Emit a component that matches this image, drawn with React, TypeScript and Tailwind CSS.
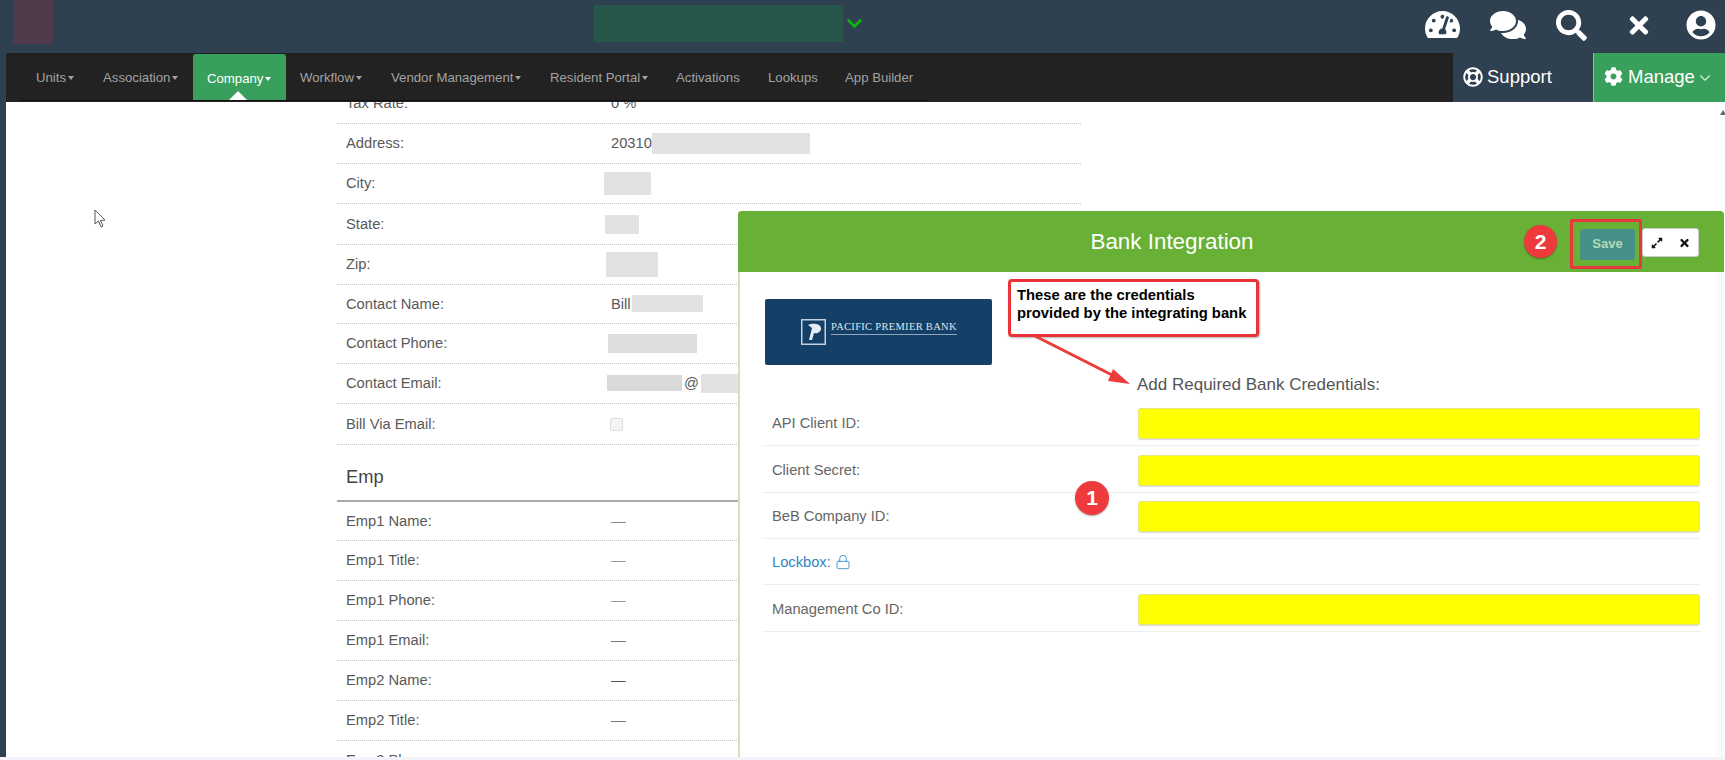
import { FaTachometerAlt, FaComments, FaSearch, FaTimes, FaUserCircle, FaChevronDown, FaRegLifeRing, FaCog, FaExpandAlt } from "react-icons/fa"
import { ChevronDown, Lock } from "lucide-react"

const navItems = [
  { label: "Units", width: "w-[67px]", caret: true },
  { label: "Association", width: "w-[104px]", caret: true },
  { label: "Company", width: "w-[93px]", caret: true, active: true },
  { label: "Workflow", width: "w-[91px]", caret: true },
  { label: "Vendor Management", width: "w-[159px]", caret: true },
  { label: "Resident Portal", width: "w-[126px]", caret: true },
  { label: "Activations", width: "w-[92px]" },
  { label: "Lookups", width: "w-[77px]" },
  { label: "App Builder", width: "w-[96px]" },
]

function Blob({ className }: { className: string }) {
  return <span className={`block bg-[#e2e2e2] ${className}`} />
}

function InfoRow({ label, height, children }: { label: string; height: string; children?: React.ReactNode }) {
  return (
    <div className={`flex items-center border-b border-dotted border-[#c8c8c8] pl-[9px] text-[14.7px] text-[#595959] ${height}`}>
      <span className="w-[265px] shrink-0">{label}</span>
      <div className="flex items-center">{children}</div>
    </div>
  )
}

function CredentialRow({ label, height, filled = true, children }: { label?: string; height: string; filled?: boolean; children?: React.ReactNode }) {
  return (
    <div className={`flex items-center border-b border-[#eeeeee] pt-[2px] text-[14.7px] text-[#666666] ${height}`}>
      <div className="w-[376px] shrink-0 pl-[10px]">{children ?? label}</div>
      {filled && <div className="h-[31px] flex-1 rounded-[3px] border border-[#e6e67a] bg-[#ffff00] shadow-[0_1px_1px_rgba(0,0,0,0.15)]" />}
    </div>
  )
}

function NumberBadge({ value, className }: { value: string; className?: string }) {
  return (
    <div className={`flex h-[33px] w-[33px] items-center justify-center rounded-full bg-[#ee3a3c] text-[21px] font-bold text-white shadow-[0_1px_2px_rgba(0,0,0,0.35)] ${className ?? ""}`}>
      {value}
    </div>
  )
}

export default function App() {
  return (
    <div className="flex h-[760px] w-[1725px] flex-col overflow-hidden bg-[#2f4050] font-['Liberation_Sans',Arial,sans-serif]">
      {/* Top bar */}
      <header className="flex h-[53px] shrink-0 items-start">
        <div className="ml-[13px] h-[44px] w-[40px] bg-[#4f3a4b]" />
        <div className="ml-[541px] mt-[5px] h-[37px] w-[249px] bg-[#27574a]" />
        <FaChevronDown className="ml-[3px] mt-[15px] h-[17px] w-[17px] text-[#0cb40c]" />
        <div className="ml-auto flex items-center text-white">
          <FaTachometerAlt className="mt-[7px] h-[35px] w-[35px]" />
          <FaComments className="ml-[30px] mt-[7px] h-[34px] w-[36px]" />
          <FaSearch className="ml-[30px] mt-[8px] h-[31px] w-[31px]" />
          <FaTimes className="ml-[41px] mt-[8px] h-[27px] w-[22px]" />
          <FaUserCircle className="ml-[36px] mr-[9px] mt-[8px] h-[30px] w-[30px]" />
        </div>
      </header>

      {/* Main nav */}
      <nav className="ml-[6px] flex h-[49px] shrink-0 bg-[#222222]">
        <div className="ml-[16px] flex h-[48px] border-b border-[#111111]">
          {navItems.map((item) => (
            <a
              key={item.label}
              className={`relative flex items-center pl-[14px] pt-[3px] text-[13.2px] ${item.width} ${item.active ? "mt-[1px] rounded-t-[3px] bg-[#38a05c] text-white" : "text-[#a3a3a3]"}`}
            >
              {item.label}
              {item.caret && <span className="ml-[2px] h-0 w-0 border-x-[3.5px] border-t-[4px] border-x-transparent border-t-current" />}
              {item.active && <span className="absolute bottom-0 left-[36px] h-0 w-0 border-x-[9px] border-b-[9px] border-x-transparent border-b-white" />}
            </a>
          ))}
        </div>
        <div className="ml-auto flex h-[49px] w-[140px] items-center border-b border-[#3d3d5c] bg-[#2f4050] pl-[10px] text-[18.5px] text-white">
          <FaRegLifeRing className="h-[20px] w-[20px]" />
          <span className="ml-[4px]">Support</span>
        </div>
        <div className="flex h-[49px] w-[132px] items-center border-l border-[#9fb5a8] bg-[#38a05c] pb-[2px] pl-[10px] text-[18.5px] text-white">
          <FaCog className="h-[19px] w-[19px]" />
          <span className="ml-[5px]">Manage</span>
          <ChevronDown className="ml-[1px] mt-[3px] h-[18px] w-[18px] text-[#d5ecdd]" strokeWidth={1.5} />
        </div>
      </nav>

      {/* Page */}
      <main className="relative ml-[6px] min-h-0 flex-1 overflow-hidden bg-white">
        <div className="ml-[331px] w-[744px] -mt-[18px]">
          <InfoRow label="Tax Rate:" height="h-[40px]">0 %</InfoRow>
          <InfoRow label="Address:" height="h-[40px]">
            20310<Blob className="h-[21px] w-[158px]" />
          </InfoRow>
          <InfoRow label="City:" height="h-[40px]">
            <Blob className="-ml-[7px] h-[23px] w-[47px]" />
          </InfoRow>
          <InfoRow label="State:" height="h-[41px]">
            <Blob className="-ml-[6px] h-[19px] w-[34px]" />
          </InfoRow>
          <InfoRow label="Zip:" height="h-[40px]">
            <Blob className="-ml-[5px] h-[25px] w-[52px]" />
          </InfoRow>
          <InfoRow label="Contact Name:" height="h-[39px]">
            Bill<Blob className="ml-[1px] h-[17px] w-[71px]" />
          </InfoRow>
          <InfoRow label="Contact Phone:" height="h-[40px]">
            <Blob className="-ml-[3px] h-[19px] w-[89px] !bg-[#dddddd]" />
          </InfoRow>
          <InfoRow label="Contact Email:" height="h-[40px]">
            <Blob className="-ml-[4px] h-[16px] w-[75px] !bg-[#d9d9d9]" />
            <span className="ml-[2px]">@</span>
            <Blob className="ml-[2px] h-[19px] w-[37px]" />
          </InfoRow>
          <InfoRow label="Bill Via Email:" height="h-[41px]">
            <span className="-ml-[1px] block h-[13px] w-[13px] rounded-[2px] border border-[#dddddd] bg-[#f4f4f4]" />
          </InfoRow>
          <div className="flex h-[57px] items-center border-b-2 border-[#aaaaaa] pl-[9px] pt-[8px] text-[18.3px] text-[#444444]">Emp</div>
          <InfoRow label="Emp1 Name:" height="h-[39px]"><span className="text-[#888888]">—</span></InfoRow>
          <InfoRow label="Emp1 Title:" height="h-[40px]"><span className="text-[#999999]">—</span></InfoRow>
          <InfoRow label="Emp1 Phone:" height="h-[40px]"><span className="text-[#999999]">—</span></InfoRow>
          <InfoRow label="Emp1 Email:" height="h-[40px]"><span className="text-[#777777]">—</span></InfoRow>
          <InfoRow label="Emp2 Name:" height="h-[40px]"><span className="text-[#555555]">—</span></InfoRow>
          <InfoRow label="Emp2 Title:" height="h-[40px]"><span className="text-[#777777]">—</span></InfoRow>
          <InfoRow label="Emp2 Phone:" height="h-[40px]">—</InfoRow>
        </div>

        {/* mouse pointer in the capture */}
        <svg className="absolute left-[88px] top-[107px]" width="12" height="20" viewBox="0 0 12 20">
          <path d="M1 1 L1 15 L4.5 12 L7 18 L9 17 L6.5 11.5 L11 11 Z" fill="#fff" stroke="#555" strokeWidth="1" />
        </svg>
        <svg className="absolute left-[1714px] top-[8px]" width="6" height="5" viewBox="0 0 6 5">
          <path d="M3 0 L6 5 L0 5 Z" fill="#666" />
        </svg>

        {/* Bank Integration dialog */}
        <section className="absolute left-[732px] right-[1px] top-[109px] bottom-0 flex flex-col rounded-t-[4px] border-l-2 border-[#cfe3c2] bg-white">
          <div className="-ml-[2px] flex h-[61px] shrink-0 items-start rounded-t-[4px] bg-[#68b136]">
            <h2 className="ml-[82px] flex-1 self-center text-center text-[22.4px] text-white">Bank Integration</h2>
            <NumberBadge value="2" className="mt-[14px]" />
            <div className="ml-[13px] mt-[8px] flex h-[50px] w-[72px] items-center rounded-[2px] border-[3px] border-[#e8363a] pl-[7px]">
              <button className="h-[31px] w-[55px] rounded-[3px] bg-[#46908a] text-[13px] font-semibold text-[#b2dab8]">Save</button>
            </div>
            <div className="mr-[25px] mt-[17px] flex h-[29px] w-[57px] items-center justify-between rounded-[3px] border border-[#cccccc] bg-white px-[8px] text-[#111111]">
              <FaExpandAlt className="h-[12px] w-[12px]" />
              <FaTimes className="h-[12px] w-[11px]" />
            </div>
          </div>

          <div className="relative flex-1 border-r-[7px] border-[#fafafa] pl-[22px]">
            <div className="flex h-[128px] items-start">
              <div className="relative ml-[3px] mt-[27px] h-[66px] w-[227px] rounded-[2px] bg-[#143f66]">
                <svg className="absolute left-[36px] top-[20px]" width="25" height="26" viewBox="0 0 25 26">
                  <rect x="0.75" y="0.75" width="23.5" height="24.5" fill="none" stroke="#c5d2de" strokeWidth="1.5" />
                  <path d="M7 6 C11 4 19 4 20 9 C20.5 13 16 15 13 14 L11 21 L8 21 L11 9 Z" fill="#e6ecf2" />
                </svg>
                <span className="absolute left-[66px] top-[22px] whitespace-nowrap border-b border-[#8ea5bb] pb-[1px] font-['Liberation_Serif',serif] text-[10.5px] leading-[12px] tracking-[0.3px] text-[#dfe7ee]">
                  PACIFIC PREMIER BANK
                </span>
              </div>
              <div className="ml-[145px] mt-[103px] text-[17px] leading-[20px] text-[#555555]">Add Required Bank Credentials:</div>
            </div>
            <div className="w-[938px]">
              <CredentialRow label="API Client ID:" height="h-[46px]" />
              <CredentialRow label="Client Secret:" height="h-[47px]" />
              <CredentialRow label="BeB Company ID:" height="h-[46px]" />
              <CredentialRow height="h-[46px]" filled={false}>
                <span className="flex items-center text-[#2f86c8]">
                  Lockbox:
                  <Lock className="ml-[4px] h-[16px] w-[16px]" strokeWidth={1.25} />
                </span>
              </CredentialRow>
              <CredentialRow label="Management Co ID:" height="h-[47px]" />
            </div>

            {/* Annotations */}
            <NumberBadge value="1" className="absolute left-[335px] top-[209px] !h-[34px] !w-[34px]" />
            <div className="absolute left-[268px] top-[7px] h-[58px] w-[251px] rounded-[4px] border-[3px] border-[#ea3338] bg-white pl-[6px] pt-[5px] text-[14.8px] font-bold leading-[17.5px] text-black shadow-[1px_1px_2px_rgba(0,0,0,0.3)]">
              These are the credentials
              <br />
              provided by the integrating bank
            </div>
            <svg className="absolute left-[280px] top-[59px]" width="115" height="60" viewBox="0 0 115 60">
              <line x1="15" y1="5" x2="96" y2="46" stroke="#ef3b3b" strokeWidth="3" />
              <polygon points="110,53 93,38 88,50" fill="#ef3b3b" />
            </svg>
          </div>
        </section>
      </main>
      <div className="h-[3px] shrink-0 bg-[#f3f4f9]" />
    </div>
  )
}
